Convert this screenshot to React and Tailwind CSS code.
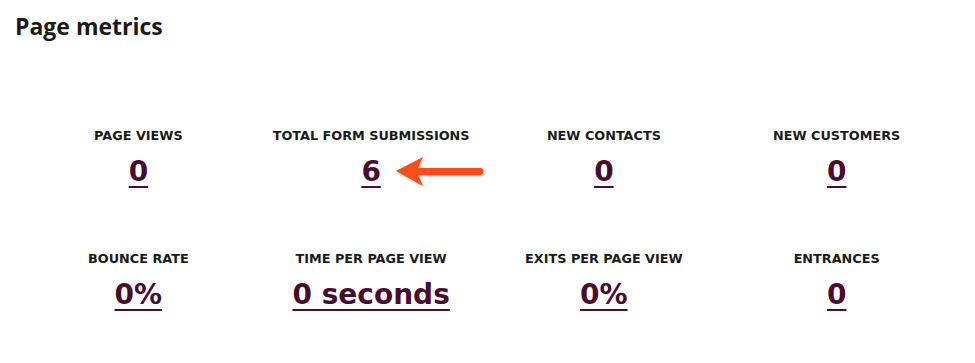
import React from "react";

const metrics = [
  { label: "PAGE VIEWS", value: "0" },
  { label: "TOTAL FORM SUBMISSIONS", value: "6", arrow: true },
  { label: "NEW CONTACTS", value: "0" },
  { label: "NEW CUSTOMERS", value: "0" },
  { label: "BOUNCE RATE", value: "0%" },
  { label: "TIME PER PAGE VIEW", value: "0 seconds" },
  { label: "EXITS PER PAGE VIEW", value: "0%" },
  { label: "ENTRANCES", value: "0" },
];

function Arrow() {
  return (
    <svg
      className="absolute left-full top-1/2 ml-[11px] -translate-y-1/2"
      width="96"
      height="36"
      viewBox="0 0 96 36"
    >
      <defs>
        <filter id="sh" x="-20%" y="-30%" width="140%" height="160%">
          <feDropShadow dx="0.5" dy="1" stdDeviation="1" floodColor="#000" floodOpacity="0.3" />
        </filter>
      </defs>
      <g filter="url(#sh)" fill="#fa4d1a">
        <path d="M4 17 L31 3 L26 14 L88 14 Q91.5 14 91.5 17.5 Q91.5 21 88 21 L26 21 L31 32 Z" />
      </g>
    </svg>
  );
}

export default function App() {
  return (
    <div
      className="w-[975px] h-[363px] bg-white overflow-hidden"
      style={{ fontFamily: "'Open Sans', Arial, sans-serif" }}
    >
      <h1 className="pl-[15px] pt-[11px] text-[23px] font-bold text-[#1a1a1a] leading-[30px]">
        Page metrics
      </h1>
      <div
        className="mt-[86px] mx-[22px] grid grid-cols-4 gap-y-[61px]"
        style={{ fontFamily: "'DejaVu Sans', Verdana, sans-serif" }}
      >
        {metrics.map((m) => (
          <div key={m.label} className="flex flex-col items-center">
            <div className="text-[12.8px] font-bold text-[#1a1a1a] leading-[18px]">
              {m.label}
            </div>
            <div className="relative mt-[10px]">
              <a className="block text-[28px] font-bold text-[#4a0b30] underline underline-offset-[5px] decoration-[2px] leading-[34px]">
                {m.value}
              </a>
              {m.arrow && <Arrow />}
            </div>
          </div>
        ))}
      </div>
    </div>
  );
}
